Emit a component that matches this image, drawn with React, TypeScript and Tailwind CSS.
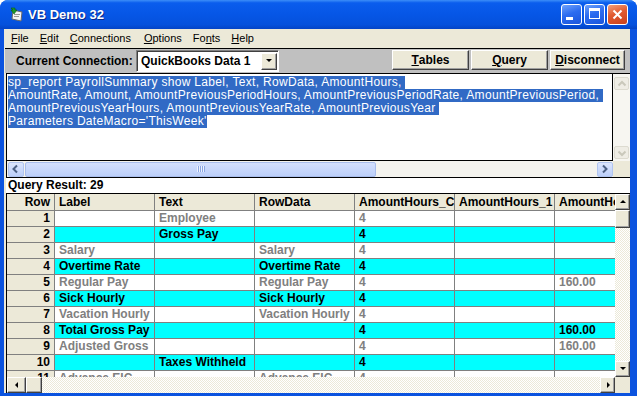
import React from "react";

const raised =
  "bg-[#ece9d8] border border-t-[#ffffff] border-l-[#ffffff] border-b-[#404040] border-r-[#404040] shadow-[inset_-1px_-1px_0_#a0a0a0]";
const checker =
  "bg-[image:repeating-conic-gradient(#ece9d8_0%_25%,#ffffff_0%_50%)] [background-size:2px_2px]";

function Tri({ dir }: { dir: "up" | "down" | "left" | "right" }) {
  const pts: Record<string, string> = {
    up: "1,5 4,2 7,5",
    down: "1,2 4,5 7,2",
    left: "5,1 2,4 5,7",
    right: "3,1 6,4 3,7",
  };
  return (
    <svg width="8" height="8" viewBox="0 0 8 8">
      <polygon points={pts[dir]} fill="#000" />
    </svg>
  );
}

function Chevron({ dir, color }: { dir: "left" | "right" | "up" | "down"; color: string }) {
  const d: Record<string, string> = {
    left: "M6 1.5 L2.5 5 L6 8.5",
    right: "M3 1.5 L6.5 5 L3 8.5",
    up: "M1.5 6.5 L5 3 L8.5 6.5",
    down: "M1.5 3.5 L5 7 L8.5 3.5",
  };
  return (
    <svg width="10" height="10" viewBox="0 0 10 10">
      <path d={d[dir]} fill="none" stroke={color} strokeWidth="2" />
    </svg>
  );
}

function TitleBar() {
  return (
    <div className="h-[29px] shrink-0 flex items-center rounded-t-[8px] bg-[image:linear-gradient(180deg,#3c8ef8_0%,#0a5ded_10%,#0656e6_50%,#0551dc_85%,#0444c6_100%)] pl-[9px]">
      <svg width="15" height="15" viewBox="0 0 15 15">
        <path d="M4 3 L13 5 L12 14 L3 12 Z" fill="#f4f4f4" stroke="#6a6a6a" strokeWidth="1" />
        <path d="M2 1 L6 1 L6 3 L8 3 L5 7 L2 3 L4 3 Z" fill="#1a9a2a" stroke="#0a5a14" strokeWidth="0.6" />
        <rect x="5" y="7" width="6" height="1" fill="#9a9a9a" />
        <rect x="5" y="9" width="5" height="1" fill="#9a9a9a" />
      </svg>
      <span className="ml-[4px] text-white font-bold text-[13px] leading-none [text-shadow:1px_1px_0_#0a2a8c]">
        VB Demo 32
      </span>
      <div className="ml-auto mr-[9px] flex gap-[2px]">
        <div className="w-[21px] h-[21px] rounded-[3px] border border-white bg-[image:linear-gradient(160deg,#6fa2fb_0%,#2c6cf0_45%,#1a55dc_100%)] relative">
          <div className="absolute left-[4px] top-[12px] w-[7px] h-[3px] bg-white" />
        </div>
        <div className="w-[21px] h-[21px] rounded-[3px] border border-white bg-[image:linear-gradient(160deg,#6fa2fb_0%,#2c6cf0_45%,#1a55dc_100%)] relative">
          <div className="absolute left-[4px] top-[3px] w-[11px] h-[11px] border border-white border-t-[3px]" />
        </div>
        <div className="w-[21px] h-[21px] rounded-[3px] border border-white bg-[image:linear-gradient(160deg,#f1a07c_0%,#e15a30_45%,#c8401c_100%)] flex items-center justify-center">
          <svg width="11" height="11" viewBox="0 0 11 11">
            <path d="M1.5 1.5 L9.5 9.5 M9.5 1.5 L1.5 9.5" stroke="#fff" strokeWidth="2" />
          </svg>
        </div>
      </div>
    </div>
  );
}

function MenuBar() {
  const items: [string, number][] = [
    ["File", 0],
    ["Edit", 0],
    ["Connections", 0],
    ["Options", 0],
    ["Fonts", 2],
    ["Help", 0],
  ];
  return (
    <div className="h-[19px] shrink-0 flex items-center pl-[7px] gap-[11px] text-[11px] text-black">
      {items.map(([t, u], i) => (
        <span key={i} className={i === 3 ? "ml-[2px]" : ""}>
          {t.slice(0, u)}
          <span className="underline">{t[u]}</span>
          {t.slice(u + 1)}
        </span>
      ))}
    </div>
  );
}

function Btn({ label, w }: { label: string; w: string }) {
  return (
    <div className={`${w} h-[20px] ${raised} flex items-center justify-center font-bold text-[12px] leading-none`}>
      <span className="underline">{label[0]}</span>
      {label.slice(1)}
    </div>
  );
}

function Toolbar() {
  return (
    <div className="h-[25px] shrink-0 ml-[1px] bg-[#c0c0c0] border-t border-black flex items-start pt-[1px]">
      <div className="ml-[11px] w-[120px] font-bold text-[12px] leading-[22px]">Current Connection:</div>
      <div className="w-[143px] h-[22px] bg-white border border-t-[#808080] border-l-[#808080] border-b-white border-r-white shadow-[inset_1px_1px_0_#404040] flex items-center justify-between pl-[4px] pr-[1px]">
        <span className="font-bold text-[12px] leading-none">QuickBooks Data 1</span>
        <div className={`w-[16px] h-[17px] ${raised} flex items-center justify-center`}>
          <Tri dir="down" />
        </div>
      </div>
      <div className="ml-auto mr-[5px] flex gap-[2px]">
        <Btn label="Tables" w="w-[77px]" />
        <Btn label="Query" w="w-[77px]" />
        <Btn label="Disconnect" w="w-[75px]" />
      </div>
    </div>
  );
}

function QueryText() {
  const lines = [
    "sp_report PayrollSummary show Label, Text, RowData, AmountHours, ",
    "AmountRate, Amount, AmountPreviousPeriodHours, AmountPreviousPeriodRate, AmountPreviousPeriod, ",
    "AmountPreviousYearHours, AmountPreviousYearRate, AmountPreviousYear ",
    "Parameters DateMacro='ThisWeek'",
  ];
  return (
    <div className="h-[88px] shrink-0 ml-[2px] flex border-t border-black">
      <div className="flex-1 bg-white border-l border-b border-r border-black pt-[2px] pl-[1px] overflow-hidden">
        <div className="flex flex-col items-start">
          {lines.map((l, i) => (
            <div key={i} className="bg-[#316ac5] text-white text-[12px] leading-[13px] tracking-[0.32px] whitespace-pre">
              {l}
            </div>
          ))}
        </div>
      </div>
      <div className="w-[17px] bg-[#f7f6f1] flex flex-col justify-between items-center pt-[3px] pb-[2px]">
        <div className="w-[15px] h-[13px] rounded-[2px] bg-[#efede5] border border-[#dddbd0] flex items-center justify-center">
          <Chevron dir="up" color="#cac8bb" />
        </div>
        <div className="w-[15px] h-[13px] rounded-[2px] bg-[#efede5] border border-[#dddbd0] flex items-center justify-center">
          <Chevron dir="down" color="#cac8bb" />
        </div>
      </div>
    </div>
  );
}

function XPHScroll() {
  const btn =
    "w-[16px] h-[15px] rounded-[2px] bg-[image:linear-gradient(180deg,#dbe5fd,#bccff9)] border border-[#b1c5f0] flex items-center justify-center";
  return (
    <div className="h-[16px] shrink-0 ml-[2px] flex">
      <div className="flex-1 bg-[#f4f3ee] flex items-center border-l border-black pl-[1px]">
        <div className={btn}>
          <Chevron dir="left" color="#4d6185" />
        </div>
        <div className="ml-[1px] w-[351px] h-[15px] rounded-[2px] bg-[image:linear-gradient(180deg,#d3dffd,#bccff9)] border border-[#a8bdec] flex items-center justify-center gap-[1px]">
          {[0, 1, 2, 3].map((i) => (
            <div key={i} className="w-[1px] h-[6px] bg-[#eef3fe] shadow-[1px_0_0_#8ca7e3]" />
          ))}
        </div>
        <div className="flex-1" />
        <div className={btn}>
          <Chevron dir="right" color="#4d6185" />
        </div>
      </div>
      <div className="w-[17px] bg-[#ece9d8]" />
    </div>
  );
}

type Row = {
  n: number;
  label?: string;
  text?: string;
  rd?: string;
  c?: string;
  h1?: string;
  ah?: string;
  cyan?: boolean;
};

const rows: Row[] = [
  { n: 1, text: "Employee", c: "4" },
  { n: 2, text: "Gross Pay", c: "4", cyan: true },
  { n: 3, label: "Salary", rd: "Salary", c: "4" },
  { n: 4, label: "Overtime Rate", rd: "Overtime Rate", c: "4", cyan: true },
  { n: 5, label: "Regular Pay", rd: "Regular Pay", c: "4", ah: "160.00" },
  { n: 6, label: "Sick Hourly", rd: "Sick Hourly", c: "4", cyan: true },
  { n: 7, label: "Vacation Hourly", rd: "Vacation Hourly", c: "4" },
  { n: 8, label: "Total Gross Pay", c: "4", ah: "160.00", cyan: true },
  { n: 9, label: "Adjusted Gross", c: "4", ah: "160.00" },
  { n: 10, text: "Taxes Withheld", c: "4", cyan: true },
  { n: 11, label: "Advance EIC", rd: "Advance EIC", c: "4" },
];

function Grid() {
  const headers = ["Label", "Text", "RowData", "AmountHours_C", "AmountHours_1", "AmountHours_2"];
  const cell = "w-[100px] shrink-0 border-r border-[#808080] pl-[4px] overflow-hidden whitespace-nowrap";
  return (
    <div className="flex-1 min-h-0 ml-[2px] border-t border-l border-black flex flex-col">
      <div className="flex-1 min-h-0 flex">
        <div className="flex-1 min-w-0 overflow-hidden bg-white font-bold text-[12px]">
          <div className="flex h-[17px] border-b border-[#808080] bg-[#ece9d8] leading-[16px] text-black">
            <div className="w-[48px] shrink-0 border-r border-[#808080] text-right pr-[4px]">Row</div>
            {headers.map((h, i) => (
              <div key={i} className={cell}>
                {h}
              </div>
            ))}
          </div>
          {rows.map((r) => {
            const bg = r.cyan ? "bg-[#00ffff]" : "bg-white";
            const fg = r.cyan ? "text-black" : "text-[#808080]";
            return (
              <div key={r.n} className={`flex h-[16px] border-b border-[#808080] leading-[15px] ${fg}`}>
                <div className="w-[48px] shrink-0 border-r border-[#808080] text-right pr-[4px] bg-[#ece9d8] text-black">
                  {r.n}
                </div>
                {[r.label, r.text, r.rd, r.c, r.h1, r.ah].map((v, i) => (
                  <div key={i} className={`${cell} ${bg}`}>
                    {v ?? ""}
                  </div>
                ))}
              </div>
            );
          })}
        </div>
        <div className="w-[15px] shrink-0 flex flex-col">
          <div className={`h-[16px] ${raised} flex items-center justify-center`}>
            <Tri dir="up" />
          </div>
          <div className={`h-[18px] ${raised}`} />
          <div className={`flex-1 ${checker}`} />
          <div className={`h-[16px] ${raised} flex items-center justify-center`}>
            <Tri dir="down" />
          </div>
        </div>
      </div>
      <div className="h-[16px] shrink-0 flex">
        <div className={`w-[19px] ${raised} flex items-center justify-center`}>
          <Tri dir="left" />
        </div>
        <div className={`w-[16px] ${raised}`} />
        <div className={`flex-1 ${checker}`} />
        <div className={`w-[15px] ${raised} flex items-center justify-center`}>
          <Tri dir="right" />
        </div>
        <div className="w-[15px] bg-[#ece9d8]" />
      </div>
    </div>
  );
}

export default function App() {
  return (
    <div className="w-[637px] h-[396px] bg-white overflow-hidden font-['Liberation_Sans',Arial,sans-serif] text-[12px] text-black">
      <div className="w-full h-full flex flex-col rounded-t-[8px] bg-[#0b53df]">
        <TitleBar />
        <div className="flex-1 min-h-0 ml-[4px] mr-[7px] mb-[3px] bg-[#ece9d8] flex flex-col">
          <MenuBar />
          <Toolbar />
          <QueryText />
          <XPHScroll />
          <div className="h-[16px] shrink-0 ml-[2px] bg-white border-t border-black font-bold text-[12px] leading-[15px] pl-[2px]">
            Query Result: 29
          </div>
          <Grid />
        </div>
      </div>
    </div>
  );
}
